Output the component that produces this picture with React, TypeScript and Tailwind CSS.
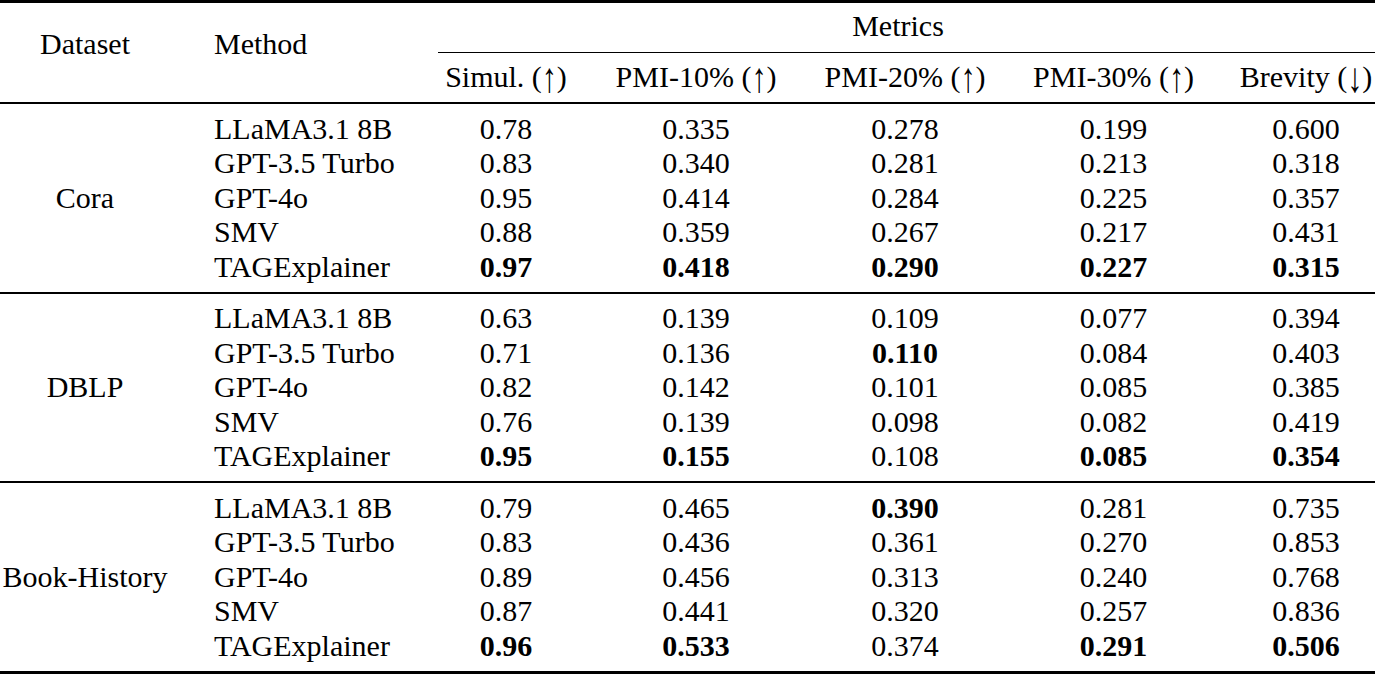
import React from "react";

const COLS = "grid grid-cols-[191px_230px_170px_210px_208px_209px_157px]";

type Row = { m: string; v: string[] };
type Group = { name: string; rows: Row[] };

const groups: Group[] = [
  {
    name: "Cora",
    rows: [
      { m: "LLaMA3.1 8B", v: ["0.78", "0.335", "0.278", "0.199", "0.600"] },
      { m: "GPT-3.5 Turbo", v: ["0.83", "0.340", "0.281", "0.213", "0.318"] },
      { m: "GPT-4o", v: ["0.95", "0.414", "0.284", "0.225", "0.357"] },
      { m: "SMV", v: ["0.88", "0.359", "0.267", "0.217", "0.431"] },
      { m: "TAGExplainer", v: ["*0.97", "*0.418", "*0.290", "*0.227", "*0.315"] },
    ],
  },
  {
    name: "DBLP",
    rows: [
      { m: "LLaMA3.1 8B", v: ["0.63", "0.139", "0.109", "0.077", "0.394"] },
      { m: "GPT-3.5 Turbo", v: ["0.71", "0.136", "*0.110", "0.084", "0.403"] },
      { m: "GPT-4o", v: ["0.82", "0.142", "0.101", "0.085", "0.385"] },
      { m: "SMV", v: ["0.76", "0.139", "0.098", "0.082", "0.419"] },
      { m: "TAGExplainer", v: ["*0.95", "*0.155", "0.108", "*0.085", "*0.354"] },
    ],
  },
  {
    name: "Book-History",
    rows: [
      { m: "LLaMA3.1 8B", v: ["0.79", "0.465", "*0.390", "0.281", "0.735"] },
      { m: "GPT-3.5 Turbo", v: ["0.83", "0.436", "0.361", "0.270", "0.853"] },
      { m: "GPT-4o", v: ["0.89", "0.456", "0.313", "0.240", "0.768"] },
      { m: "SMV", v: ["0.87", "0.441", "0.320", "0.257", "0.836"] },
      { m: "TAGExplainer", v: ["*0.96", "*0.533", "0.374", "*0.291", "*0.506"] },
    ],
  },
];

const metricHeads: { label: string; arrow: string }[] = [
  { label: "Simul.", arrow: "↑" },
  { label: "PMI-10%", arrow: "↑" },
  { label: "PMI-20%", arrow: "↑" },
  { label: "PMI-30%", arrow: "↑" },
  { label: "Brevity", arrow: "↓" },
];

export default function App() {
  return (
    <div className="w-[1380px] h-[679px] bg-white overflow-hidden text-black [font-family:'Liberation_Serif','Times_New_Roman',serif] text-[30px] leading-[34.5px]">
      <div className="w-[1375px] border-t-[3px] border-b-[3px] border-black">
        {/* header */}
        <div className={`${COLS} border-b-[2px] border-black`}>
          <div className="row-span-2 pt-[23.5px] pr-[21px] text-center whitespace-nowrap">Dataset</div>
          <div className="row-span-2 pt-[23.5px] pl-[23px] whitespace-nowrap">Method</div>
          <div className="col-span-5 pt-[6px]">
            <div className="text-center whitespace-nowrap">Metrics</div>
            <div className="ml-[17px] mt-[8px] border-t-[1.5px] border-black" />
          </div>
          {metricHeads.map((h, i) => (
            <div
              key={h.label}
              className={`text-center whitespace-nowrap pt-[7px] pb-[8px] ${i === 4 ? "pl-[19px]" : ""}`}
            >
              {h.label} (<span className="inline-block origin-center scale-y-[1.4] translate-y-[1px]">{h.arrow}</span>)
            </div>
          ))}
        </div>
        {/* body */}
        {groups.map((g, gi) => (
          <div
            key={g.name}
            className={`${COLS} py-[7.5px] ${gi < groups.length - 1 ? "border-b-[2px] border-black" : ""}`}
          >
            <div className="row-span-5 flex items-center justify-center pr-[21px] whitespace-nowrap">
              {g.name}
            </div>
            {g.rows.map((r) => (
              <React.Fragment key={r.m}>
                <div className="pl-[23px] whitespace-nowrap">{r.m}</div>
                {r.v.map((v, i) => {
                  const bold = v.startsWith("*");
                  const t = bold ? v.slice(1) : v;
                  return (
                    <div
                      key={i}
                      className={`text-center whitespace-nowrap ${i === 4 ? "pl-[19px]" : ""} ${bold ? "font-bold" : ""}`}
                    >
                      {t}
                    </div>
                  );
                })}
              </React.Fragment>
            ))}
          </div>
        ))}
      </div>
    </div>
  );
}
